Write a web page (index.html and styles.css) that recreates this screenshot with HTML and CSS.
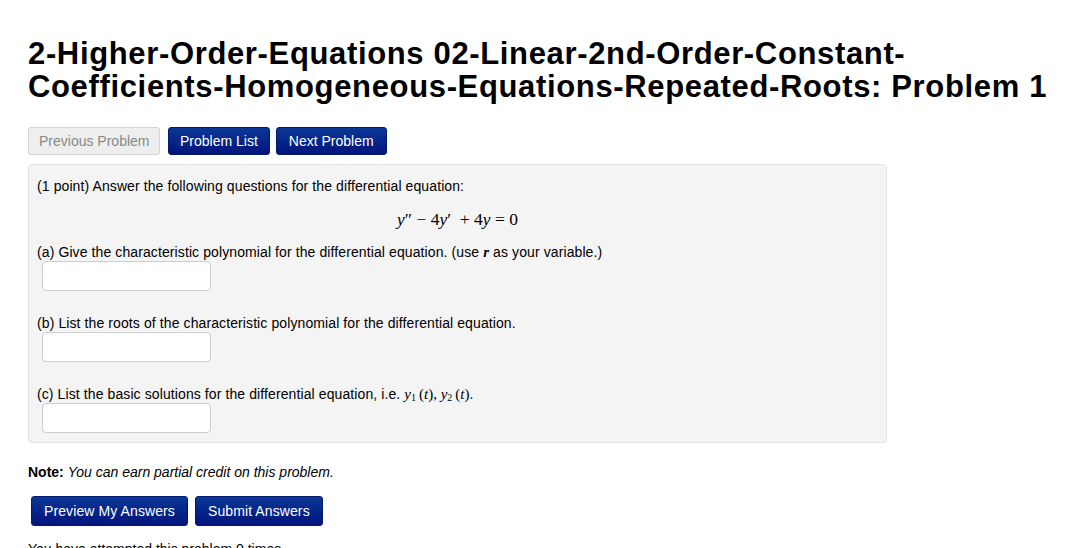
FILE: index.html
```html
<!DOCTYPE html>
<html>
<head>
<meta charset="utf-8">
<link rel="stylesheet" href="styles.css">
</head>
<body>
<div class="page">
  <h1 class="title">2-Higher-Order-Equations 02-Linear-2nd-Order-Constant-Coefficients-Homogeneous-Equations-Repeated-Roots: Problem 1</h1>
  <div class="nav">
    <span class="btn btn-disabled">Previous Problem</span>
    <span class="btn btn-primary btn-list">Problem List</span>
    <span class="btn btn-primary">Next Problem</span>
  </div>
  <div class="problem">
    <p class="line">(1 point) Answer the following questions for the differential equation:</p>
    <div class="equation"><span class="math"><i>y</i>&#8243; &minus; 4<i>y</i>&#8242; &nbsp;+ 4<i>y</i> = 0</span></div>
    <p class="line">(a) Give the characteristic polynomial for the differential equation. (use <i class="var">r</i> as your variable.)</p>
    <div class="answer"><span class="input"></span></div>
    <p class="line">(b) List the roots of the characteristic polynomial for the differential equation.</p>
    <div class="answer"><span class="input"></span></div>
    <p class="line">(c) List the basic solutions for the differential equation, i.e. <span class="math"><i>y</i><sub>1</sub>&thinsp;(<i>t</i>), <i>y</i><sub>2</sub>&thinsp;(<i>t</i>)</span>.</p>
    <div class="answer"><span class="input"></span></div>
  </div>
  <p class="note"><b>Note:</b> <i>You can earn partial credit on this problem.</i></p>
  <div class="submit">
    <span class="btn btn-primary btn-big">Preview My Answers</span>
    <span class="btn btn-primary btn-big">Submit Answers</span>
  </div>
  <p class="attempts">You have attempted this problem 0 times.</p>
</div>
</body>
</html>
```
FILE: styles.css
```css
html, body {
  margin: 0;
  padding: 0;
  background: #ffffff;
}
body {
  font-family: "Liberation Sans", Arial, sans-serif;
  color: #000;
  font-size: 14px;
}
.page {
  padding: 37px 0 0 28px;
  width: 860px;
}
.title {
  margin: 0;
  font-size: 31px;
  line-height: 33px;
  font-weight: bold;
  width: 1035px;
  letter-spacing: 0.65px;
}
.nav {
  display: flex;
  gap: 6px;
  margin-top: 24px;
}
.btn {
  display: inline-block;
  box-sizing: border-box;
  white-space: nowrap;
  height: 28px;
  line-height: 26px;
  padding: 0 12px;
  font-size: 14px;
  border-radius: 3px;
  border: 1px solid transparent;
}
.btn-disabled {
  background: #eeeeee;
  color: #888888;
  border-color: #d4d4d4;
  padding: 0 10px;
  width: 132px;
  text-align: center;
  margin-right: 2px;
}
.btn-primary {
  background: linear-gradient(#0a3796, #00147c);
  color: #ffffff;
  border-color: #021a6e;
}
.btn-list {
  padding: 0 11px;
}
.btn-big {
  height: 30px;
  line-height: 28px;
  padding: 0 12px;
  letter-spacing: 0.1px;
}
.problem {
  margin-top: 9px;
  box-sizing: border-box;
  width: 859px;
  background: #f4f4f4;
  border: 1px solid #e3e3e3;
  border-radius: 4px;
  padding: 12px 8px 8px 8px;
}
.line {
  margin: 0;
  line-height: 18px;
  letter-spacing: 0.1px;
}
.equation {
  text-align: center;
  padding: 14px 0 13px 0;
  line-height: 20px;
}
.math {
  font-family: "Liberation Serif", "Times New Roman", serif;
  font-size: 17.5px;
  letter-spacing: 0;
}
.line .math {
  font-size: 15px;
  line-height: 10px;
}
.math sub {
  font-size: 10px;
  line-height: 0;
  vertical-align: -2px;
}
.var {
  font-family: "Liberation Serif", serif;
  font-weight: bold;
  font-size: 15px;
  line-height: 10px;
}
.answer {
  padding: 0 0 23px 5px;
}
.answer:last-child {
  padding-bottom: 1px;
}
.input {
  display: block;
  box-sizing: border-box;
  width: 169px;
  height: 30px;
  background: #ffffff;
  border: 1px solid #cccccc;
  border-radius: 4px;
}
.note {
  margin: 20px 0 0 0;
  line-height: 18px;
}
.submit {
  display: flex;
  gap: 7px;
  margin: 15px 0 0 3px;
}
.attempts {
  margin: 14px 0 0 0;
  line-height: 18px;
}
```
